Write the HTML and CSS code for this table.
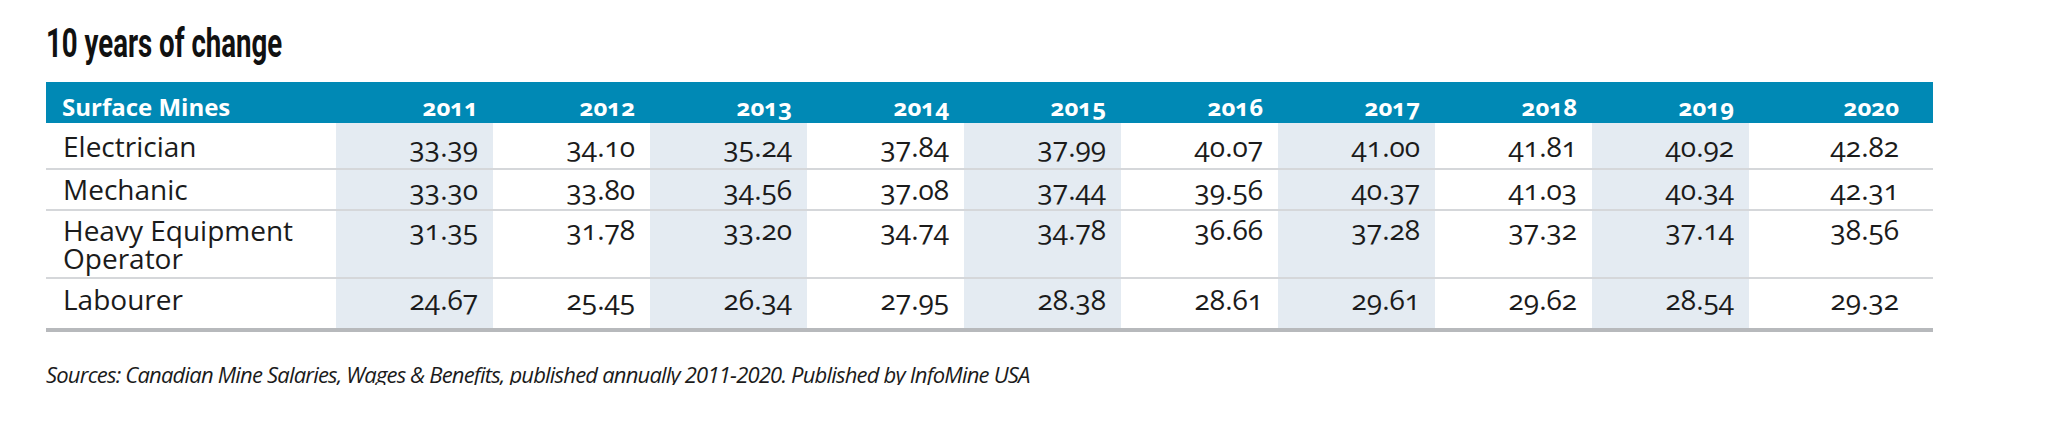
FILE: index.html
```html
<!DOCTYPE html>
<html lang="en">
<head>
<meta charset="utf-8">
<title>10 years of change</title>
<link rel="stylesheet" href="styles.css">
</head>
<body>
<div class="page">
  <h1 class="title"><span class="title-text">10 years of change</span></h1>
  <div class="table">
    <div class="row head">
      <div class="cell label">Surface Mines</div>
      <div class="cell">2011</div><div class="cell">2012</div><div class="cell">2013</div><div class="cell">2014</div><div class="cell">2015</div>
      <div class="cell">2016</div><div class="cell">2017</div><div class="cell">2018</div><div class="cell">2019</div><div class="cell last">2020</div>
    </div>
    <div class="row r1">
      <div class="cell label">Electrician</div>
      <div class="cell s">33.39</div><div class="cell">34.10</div><div class="cell s">35.24</div><div class="cell">37.84</div><div class="cell s">37.99</div>
      <div class="cell">40.07</div><div class="cell s">41.00</div><div class="cell">41.81</div><div class="cell s">40.92</div><div class="cell last">42.82</div>
    </div>
    <div class="row r2">
      <div class="cell label">Mechanic</div>
      <div class="cell s">33.30</div><div class="cell">33.80</div><div class="cell s">34.56</div><div class="cell">37.08</div><div class="cell s">37.44</div>
      <div class="cell">39.56</div><div class="cell s">40.37</div><div class="cell">41.03</div><div class="cell s">40.34</div><div class="cell last">42.31</div>
    </div>
    <div class="row r3">
      <div class="cell label two">Heavy Equipment<br>Operator</div>
      <div class="cell s">31.35</div><div class="cell">31.78</div><div class="cell s">33.20</div><div class="cell">34.74</div><div class="cell s">34.78</div>
      <div class="cell">36.66</div><div class="cell s">37.28</div><div class="cell">37.32</div><div class="cell s">37.14</div><div class="cell last">38.56</div>
    </div>
    <div class="row r4">
      <div class="cell label">Labourer</div>
      <div class="cell s">24.67</div><div class="cell">25.45</div><div class="cell s">26.34</div><div class="cell">27.95</div><div class="cell s">28.38</div>
      <div class="cell">28.61</div><div class="cell s">29.61</div><div class="cell">29.62</div><div class="cell s">28.54</div><div class="cell last">29.32</div>
    </div>
  </div>
  <p class="source">Sources: Canadian Mine Salaries, Wages &amp; Benefits, published annually 2011-2020. Published by InfoMine USA</p>
</div>
</body>
</html>
```

FILE: styles.css
```css
html, body {
  margin: 0;
  padding: 0;
  background: #ffffff;
}

.page {
  padding: 25px 0 0 46px;
  color: #1b1b1b;
  font-family: "Open Sans", "Noto Sans", sans-serif;
}

.title {
  margin: 0 0 19px 0;
  font-family: Roboto, "Liberation Sans", sans-serif;
  font-weight: 700;
  font-size: 40px;
  line-height: 38px;
  color: #111111;
}

.title-text {
  display: inline-block;
  transform: scaleX(0.69);
  transform-origin: left center;
  white-space: nowrap;
}

.table {
  width: 1887px;
  border-bottom: 4px solid #b7b9bc;
  font-variant-numeric: oldstyle-nums;
}

.row {
  display: grid;
  grid-template-columns: 290px repeat(9, 157px) 1fr;
  box-sizing: border-box;
}

.cell {
  text-align: right;
  padding-right: 15px;
  font-size: 28px;
  line-height: 28px;
}

.cell.last {
  padding-right: 34px;
}

.cell.label {
  text-align: left;
  padding-left: 17px;
  padding-right: 0;
}

.row.head {
  background: #0089b5;
  color: #ffffff;
  height: 41px;
}

.row.head .cell {
  font-weight: 700;
  font-size: 24px;
  line-height: 24px;
  padding-top: 13px;
}

.row.head .cell.label {
  padding-left: 16px;
}

.cell.s {
  background: #e4ebf2;
}

.r1, .r2, .r3 {
  border-bottom: 2px solid #d5d7da;
}

.r1 { height: 47px; }
.r1 .cell { padding-top: 9px; }

.r2 { height: 41px; }
.r2 .cell { padding-top: 5px; }

.r3 { height: 68px; }
.r3 .cell { padding-top: 4px; }
.r3 .cell.two {
  padding-top: 5px;
  line-height: 28px;
}

.r4 { height: 49px; }
.r4 .cell { padding-top: 6px; }

.source {
  margin: 31px 0 0 0;
  font-style: italic;
  font-size: 22px;
  line-height: 22px;
  letter-spacing: -0.8px;
  color: #1b1b1b;
}
```
